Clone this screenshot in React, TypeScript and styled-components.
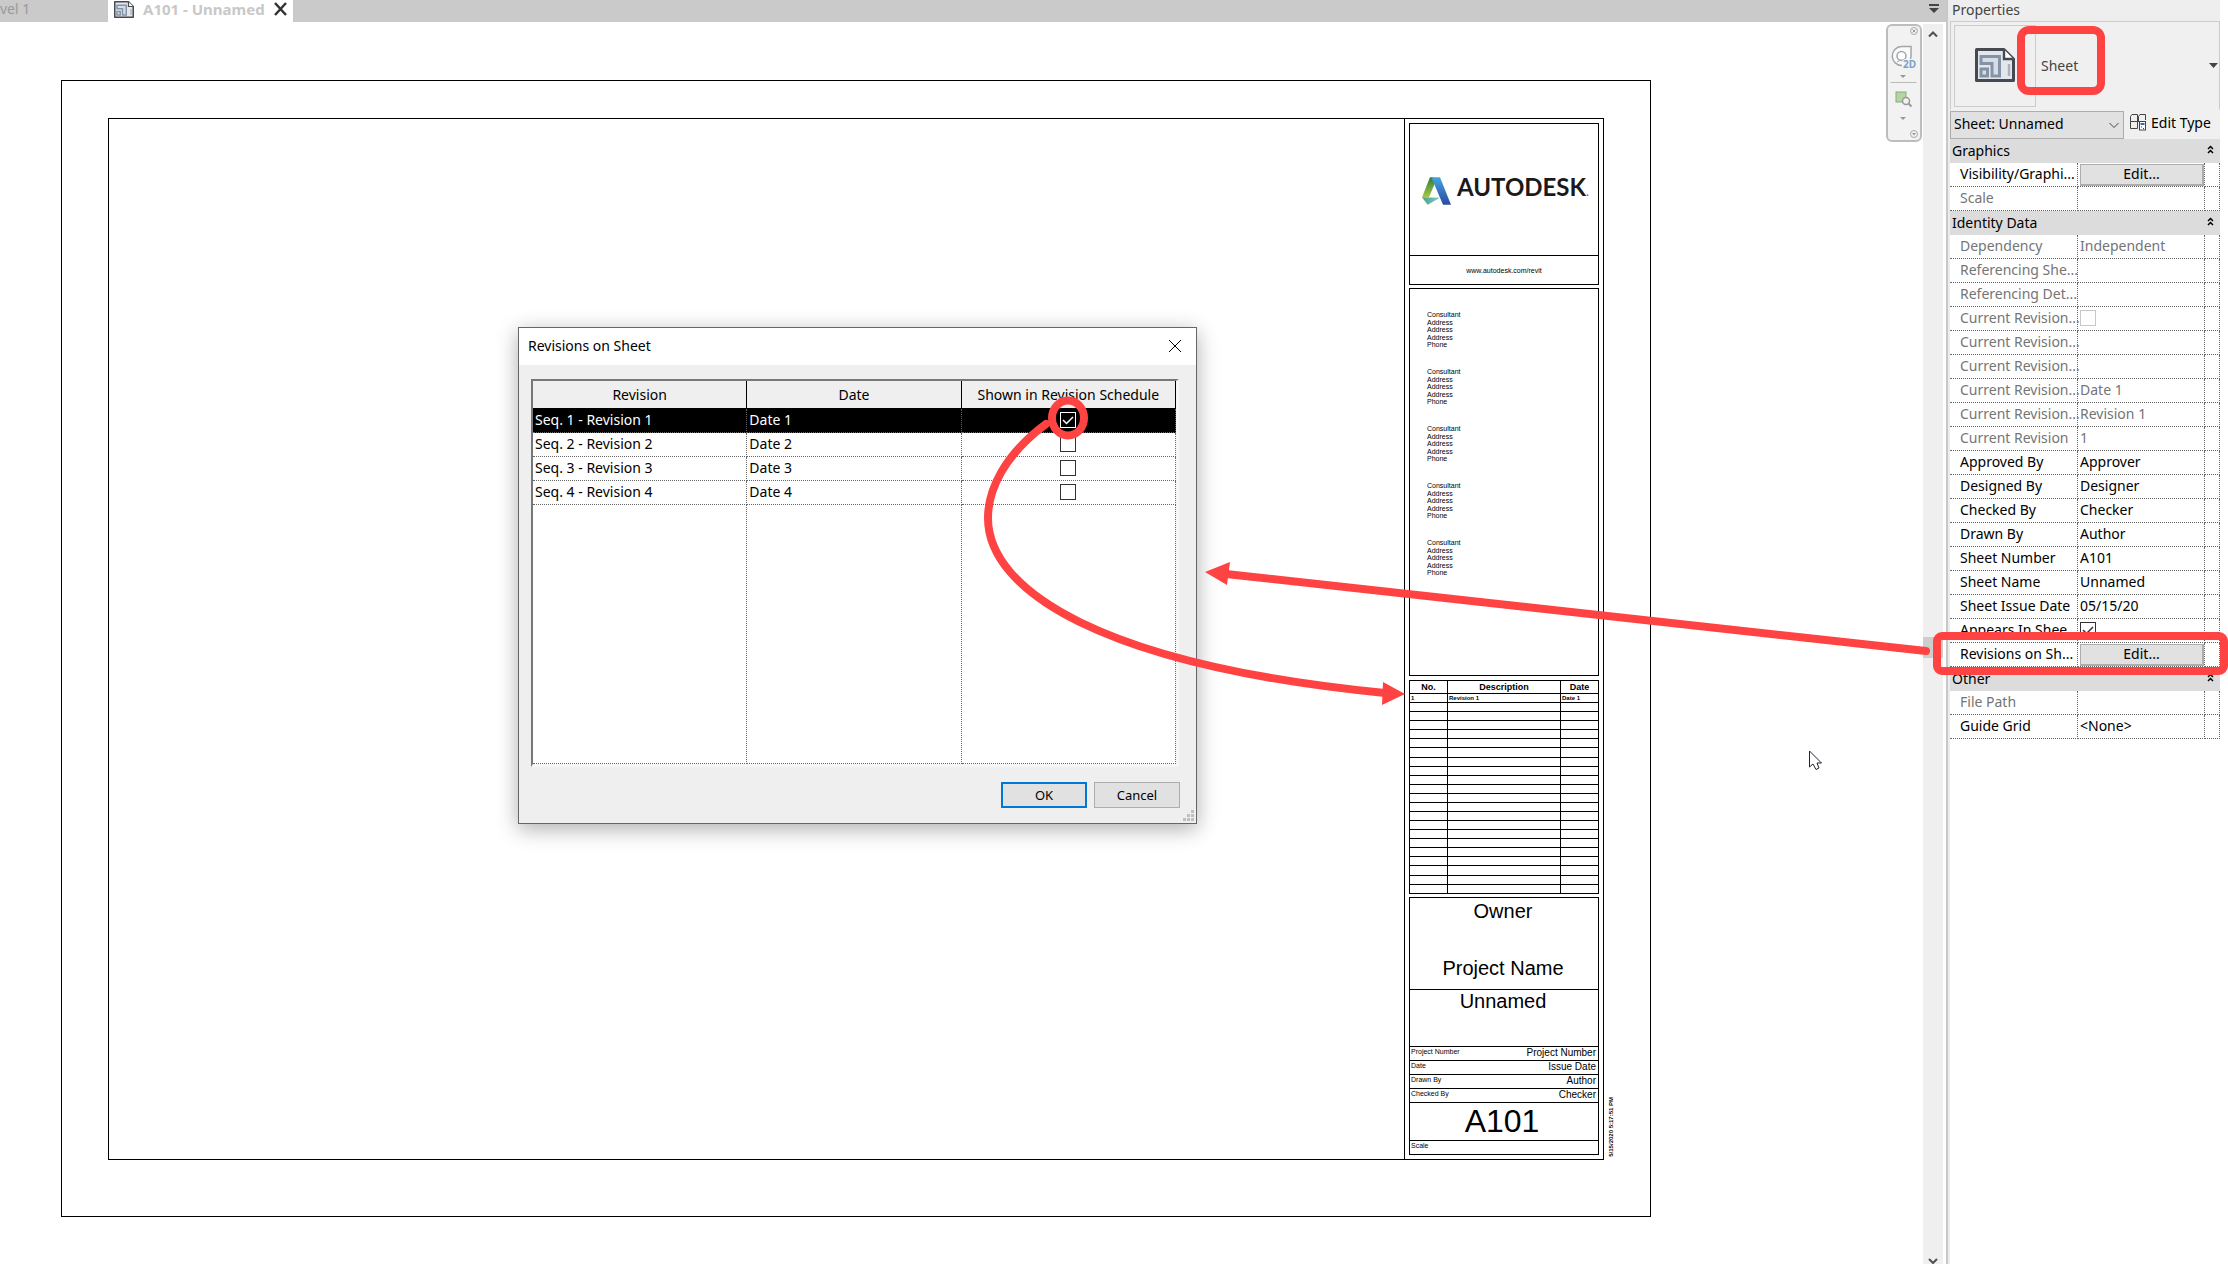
import React from "react";
import styled, { createGlobalStyle, css } from "styled-components";

const UI_FONT = `"Noto Sans", "Open Sans", sans-serif`;
const SHEET_FONT = `"Liberation Sans", Arial, sans-serif`;
const RED = "#ff4343";

const GlobalStyle = createGlobalStyle`
  *, *::before, *::after { box-sizing: border-box; }
  body {
    margin: 0;
    background: #fff;
    color: #000;
    font: 14px/20px ${UI_FONT};
  }
  button, input, select { font: inherit; color: inherit; margin: 0; }
  h2, p, address { margin: 0; font: inherit; }
`;

/* ---------- shell ---------- */

const Shell = styled.div`
  position: relative;
  display: flex;
  height: 100vh;
  overflow: hidden;
`;

const Main = styled.main`
  flex: 1;
  min-width: 0;
  display: flex;
  flex-direction: column;
`;

const TabBar = styled.nav`
  display: flex;
  justify-content: space-between;
  height: 22px;
  background: #cacaca;
`;

const Tabs = styled.div`
  display: flex;
  height: 22px;
`;

const Tab = styled.button<{ $active?: boolean }>`
  display: flex;
  align-items: center;
  width: 108px;
  height: 22px;
  padding: 0 0 4px;
  border: 0;
  background: none;
  color: #999;
  font-size: 14px;
  white-space: nowrap;
  ${(p) =>
    p.$active &&
    css`
      width: auto;
      padding: 0 6px 4px 6px;
      gap: 9px;
      background: #fff;
      color: #c8c8c8;
      font-size: 15px;
      font-weight: 700;
    `}
`;

const TabMenuButton = styled.button`
  width: 28px;
  height: 22px;
  padding: 0 0 4px 11px;
  border: 0;
  background: none;
  line-height: 0;
  text-align: left;
`;

const Workspace = styled.div`
  flex: 1;
  min-height: 0;
  display: flex;
  padding-right: 3px;
`;

const Canvas = styled.section`
  position: relative;
  flex: 1;
  display: flex;
`;

const ScrollTrack = styled.div`
  display: flex;
  flex-direction: column;
  align-items: center;
  justify-content: space-between;
  width: 20px;
  margin-top: 2px;
  padding-top: 6px;
  background: #efefef;
`;

const ScrollThumb = styled.div`
  width: 20px;
  height: 21px;
  background: #cdcdcd;
`;

const ScrollButton = styled.button`
  padding: 0;
  border: 0;
  background: none;
  line-height: 0;
`;

/* ---------- drawing sheet ---------- */

const Sheet = styled.article`
  flex: 1;
  display: flex;
  margin: 58px 272px 47px 61px;
  padding: 37px 0 56px 46px;
  border: 1px solid #000;
  font-family: ${SHEET_FONT};
`;

const SheetFrame = styled.div`
  flex: 1;
  display: flex;
  justify-content: flex-end;
  border: 1px solid #000;
`;

const TitleBlock = styled.div`
  display: flex;
  flex-direction: column;
  gap: 3px;
  width: 199px;
  padding: 4px;
  border-left: 1px solid #000;
`;

const Panel = styled.div<{ $grow?: boolean }>`
  display: flex;
  flex-direction: column;
  border: 1px solid #000;
  ${(p) => p.$grow && "flex: 1;"}
`;

const LogoCell = styled.div`
  display: flex;
  align-items: center;
  gap: 6px;
  height: 132px;
  padding: 2px 0 0 12px;
  border-bottom: 1px solid #000;
`;

const Wordmark = styled.span`
  padding-bottom: 2px;
  font: 700 24px/28px Lato, sans-serif;
  color: #1a1a1a;
  small {
    font-size: 12px;
    color: #777;
  }
`;

const SiteLink = styled.a`
  height: 28px;
  font-size: 7px;
  line-height: 29px;
  text-align: center;
  color: #000;
  text-decoration: none;
`;

const Consultants = styled.div`
  display: flex;
  flex-direction: column;
  gap: 20px;
  padding: 22px 17px;
`;

const Consultant = styled.address`
  display: flex;
  flex-direction: column;
  justify-content: space-between;
  height: 37px;
  font-size: 7px;
  line-height: 7px;
`;

const Schedule = styled.table`
  width: 100%;
  height: 214px;
  margin-top: 1px;
  border-collapse: collapse;
  table-layout: fixed;
  font-size: 6px;
  font-weight: 700;
  line-height: 7px;
  th, td {
    height: 9px;
    padding: 0 1px;
    border: 1px solid #000;
    text-align: left;
  }
  th {
    height: 13px;
    font-size: 9px;
    line-height: 10px;
    text-align: center;
  }
`;

const Big = styled.p<{ $height: number }>`
  height: ${(p) => p.$height}px;
  padding: 2px 2px 0 0;
  font-size: 20px;
  line-height: 23px;
  text-align: center;
`;

const NameCell = styled.div<{ $tight?: boolean }>`
  border-bottom: 1px solid #000;
  ${(p) => p.$tight && `${Big} { padding-top: 0; line-height: 22px; }`}
`;

const InfoRow = styled.div<{ $last?: boolean }>`
  display: flex;
  justify-content: space-between;
  height: ${(p) => (p.$last ? 13 : 14)}px;
  padding: 0 2px 0 1px;
  border-bottom: ${(p) => (p.$last ? 0 : 1)}px solid #000;
  font-size: 10px;
  line-height: 12px;
`;

const InfoLabel = styled.span`
  font-size: 7px;
  line-height: 9px;
`;

const SheetNumber = styled.p`
  height: 38px;
  padding-right: 4px;
  border-bottom: 1px solid #000;
  font-size: 32px;
  line-height: 36px;
  text-align: center;
`;

const SheetMargin = styled.div`
  display: flex;
  align-items: flex-end;
  width: 46px;
  padding: 0 0 3px 4px;
`;

const PlotStamp = styled.span`
  writing-mode: vertical-rl;
  transform: rotate(180deg);
  font-size: 6px;
  font-weight: 700;
  line-height: 7px;
  white-space: nowrap;
`;

/* ---------- navigation bar ---------- */

const NavBar = styled.div`
  position: absolute;
  top: 2px;
  right: 1px;
  display: flex;
  flex-direction: column;
  align-items: center;
  width: 36px;
  height: 118px;
  border: 2px solid #bdbdbd;
  border-radius: 6px;
  background: #f2f2f2;
`;

/* ---------- dialog ---------- */

const Dialog = styled.section`
  position: absolute;
  left: 518px;
  top: 305px;
  width: 679px;
  border: 1px solid #666;
  background: #efefef;
  box-shadow: 0 5px 20px rgba(0, 0, 0, 0.32);
`;

const DialogTitle = styled.header`
  display: flex;
  align-items: center;
  justify-content: space-between;
  height: 37px;
  padding: 0 14px 1px 9px;
  background: #fff;
`;

const IconButton = styled.button`
  padding: 0;
  border: 0;
  background: none;
  line-height: 0;
`;

const DialogBody = styled.div`
  padding: 14px 16px 15px 12px;
`;

const GridBox = styled.div`
  margin-right: 1px;
  border: solid;
  border-width: 2px 3px 3px 2px;
  border-color: #777 #f6f6f6 #f6f6f6 #777;
  background: #fff;
`;

const RevisionGrid = styled.table`
  width: 100%;
  height: 383px;
  border-collapse: separate;
  border-spacing: 0;
  table-layout: fixed;
  th {
    height: 28px;
    padding: 0;
    border-right: 1px solid #000;
    border-bottom: 1px solid #000;
    background: #efefef;
    font-weight: 400;
  }
  td {
    height: 24px;
    padding: 0 2px 1px 2px;
    border-right: 1px dotted #666;
    border-bottom: 1px dotted #666;
    line-height: 20px;
  }
`;

const RevisionRow = styled.tr<{ $selected?: boolean }>`
  ${(p) => p.$selected && "background: #000; color: #fff;"}
`;

const FillerRow = styled.tr`
  && td { height: auto; }
`;

const CheckCell = styled.div`
  display: flex;
  justify-content: center;
`;

const DialogActions = styled.div`
  display: flex;
  justify-content: flex-end;
  gap: 7px;
  padding-top: 15px;
`;

const PushButton = styled.button<{ $primary?: boolean }>`
  width: 86px;
  height: 26px;
  padding: 0;
  border: ${(p) => (p.$primary ? "2px solid #0078d7" : "1px solid #adadad")};
  background: #e1e1e1;
  font-size: 13px;
  line-height: 20px;
`;

const Grip = styled.svg`
  position: absolute;
  right: 1px;
  bottom: 1px;
`;

/* ---------- check box ---------- */

const CheckWrap = styled.span<{ $tone: string }>`
  position: relative;
  display: block;
  width: 16px;
  height: 16px;
  color: ${(p) => p.$tone};
  input {
    appearance: none;
    display: block;
    width: 16px;
    height: 16px;
    border: 1px solid currentColor;
  }
  svg {
    position: absolute;
    inset: 0;
    pointer-events: none;
  }
`;

/* ---------- properties palette ---------- */

const Palette = styled.aside`
  width: 282px;
  padding: 0 8px 0 2px;
  border-left: 2px solid #c8c8c8;
  background: linear-gradient(90deg, #ececec 2px, #fff 2px);
`;

const PaletteTitle = styled.h2`
  height: 21px;
  padding-left: 2px;
  background: #eee;
  color: #444;
  line-height: 19px;
`;

const TypeSelector = styled.div`
  display: flex;
  align-items: center;
  gap: 5px;
  height: 89px;
  padding: 3px 1px 3px 3px;
  border: 1px solid #ccc;
  border-bottom-color: #f0f0f0;
  background: #f0f0f0;
  color: #444;
`;

const TypeThumb = styled.div`
  display: flex;
  align-items: center;
  width: 82px;
  height: 82px;
  padding-left: 20px;
  padding-bottom: 2px;
  border: 1px solid #ccc;
`;

const TypeName = styled.span`
  flex: 1;
  padding-top: 1px;
`;

const InstanceBar = styled.div`
  display: flex;
  align-items: center;
  gap: 6px;
  height: 29px;
  background: #f0f0f0;
`;

const SelectWrap = styled.label`
  position: relative;
  width: 174px;
  select {
    appearance: none;
    width: 100%;
    height: 28px;
    padding: 0 24px 2px 3px;
    border: 1px solid #adadad;
    border-radius: 0;
    background: #e1e1e1;
  }
  svg {
    position: absolute;
    right: 5px;
    top: 11px;
    pointer-events: none;
  }
`;

const EditType = styled.button`
  display: flex;
  align-items: center;
  gap: 4px;
  padding: 0 0 4px;
  border: 0;
  background: none;
  white-space: nowrap;
`;

const PropertyTable = styled.table`
  width: 100%;
  border-collapse: separate;
  border-spacing: 0;
  table-layout: fixed;
`;

const GroupCell = styled.th`
  height: 24px;
  padding: 0 6px 0 2px;
  background: #dcdcdc;
  font-weight: 400;
  text-align: left;
  div {
    display: flex;
    justify-content: space-between;
  }
  svg { margin-top: 4px; }
`;

const PropertyRow = styled.tr<{ $dim?: boolean }>`
  color: ${(p) => (p.$dim ? "#757575" : "#000")};
  th, td {
    height: 24px;
    padding: 0 0 2px 2px;
    border-right: 1px dotted #666;
    border-bottom: 1px dotted #666;
    font-weight: 400;
    line-height: 20px;
    text-align: left;
    white-space: nowrap;
  }
  th { padding-left: 10px; }
`;

const ValueInput = styled.input`
  display: block;
  width: 100%;
  height: 20px;
  padding: 0;
  border: 0;
  background: none;
`;

const EditButton = styled.button`
  display: block;
  width: 100%;
  height: 22px;
  margin-bottom: -2px;
  padding: 0;
  border: 1px solid #adadad;
  border-right-width: 2px;
  border-bottom-width: 2px;
  background: #e1e1e1;
  line-height: 18px;
`;

const Annotations = styled.svg`
  position: absolute;
  top: 0;
  left: 0;
  pointer-events: none;
`;

/* ---------- icons ---------- */

const SheetIcon = ({ width, height }: { width: number; height: number }) => (
  <svg width={width} height={height} viewBox="0 0 40 34" aria-hidden="true">
    <path d="M1.500 1.500H29L38.500 11V32.500H1.500Z" fill="#e3e7ec" stroke="#454a52" strokeWidth="3" strokeLinejoin="round" />
    <path d="M29 1.500V11H38.500" fill="#fff" stroke="#454a52" strokeWidth="2.400" />
    <path d="M6 8.500H24.500V28H17V15.500H6Z" fill="#d6dde6" stroke="#8593a6" strokeWidth="3" />
    <rect x="6" y="21" width="6.500" height="7" fill="#d6dde6" stroke="#8593a6" strokeWidth="3" />
    <path d="M34 16V28" stroke="#a9b1bc" strokeWidth="2.400" />
  </svg>
);

const Chevrons = () => (
  <svg width="7" height="9" viewBox="0 0 7 9" fill="none" stroke="#000" strokeWidth="1.500" aria-hidden="true">
    <path d="M1 4L3.500 1.500L6 4M1 8L3.500 5.500L6 8" />
  </svg>
);

const Arrow = ({ up }: { up?: boolean }) => (
  <svg width="12" height="8" viewBox="0 0 12 8" fill="none" stroke="#505050" strokeWidth="2" aria-hidden="true">
    <path d={up ? "M2 6.500L6 2.500L10 6.500" : "M2 3L6 7L10 3"} />
  </svg>
);

const AutodeskMark = () => (
  <svg width="29" height="28" viewBox="0 0 87 83" aria-hidden="true">
    <defs>
      <linearGradient id="leaf" x1="0" y1="0" x2="0" y2="1">
        <stop offset="0" stopColor="#2f7a3c" />
        <stop offset="1" stopColor="#a5c845" />
      </linearGradient>
      <linearGradient id="sky" x1="0" y1="0" x2="0" y2="1">
        <stop offset="0" stopColor="#42a5e0" />
        <stop offset="1" stopColor="#2d4aa0" />
      </linearGradient>
      <linearGradient id="sea" x1="0" y1="0" x2="1" y2="0">
        <stop offset="0" stopColor="#4a9c8c" />
        <stop offset="1" stopColor="#7fd0c4" />
      </linearGradient>
    </defs>
    <path d="M24 0H34L40 15L21 60H0Z" fill="url(#leaf)" />
    <path d="M0 60L54 62L17 83Z" fill="url(#sea)" />
    <path d="M28 0H54L87 83H63Z" fill="url(#sky)" />
  </svg>
);

const NavIcons = () => (
  <svg width="32" height="114" viewBox="0 0 32 114" fill="none" aria-hidden="true">
    <circle cx="26" cy="5" r="3.500" stroke="#aaa" />
    <path d="M24.500 3.500L27.500 6.500M27.500 3.500L24.500 6.500" stroke="#999" />
    <path d="M14 39.500A9.500 9.500 0 1 1 13.500 20.500H23V30.500Q23 33 21 35" fill="#fafafa" stroke="#a2a6ab" strokeWidth="1.500" />
    <circle cx="13.500" cy="30" r="4.500" fill="#fff" stroke="#a2a6ab" strokeWidth="1.500" />
    <path d="M9 36Q14 32 19 36" stroke="#a2a6ab" />
    <path d="M12 49H18L15 52Z" fill="#999" />
    <path d="M2.500 56.500H28.500" stroke="#bbb" />
    <rect x="8" y="66" width="10" height="10" fill="#b5d5a5" stroke="#85ad78" />
    <circle cx="18" cy="75" r="3.500" fill="#f2f2f2" stroke="#999" strokeWidth="1.500" />
    <path d="M20.500 77.500L23.500 80.500" stroke="#999" strokeWidth="2" />
    <path d="M12 91H18L15 94Z" fill="#999" />
    <circle cx="26" cy="108" r="3.500" stroke="#aaa" />
    <path d="M24 107H28L26 109.500Z" fill="#999" />
    <text x="15" y="42" fill="#7d9fc6" stroke="#f2f2f2" strokeWidth="2" paintOrder="stroke" fontFamily="Noto Sans, sans-serif" fontWeight="700" fontSize="10">2D</text>
  </svg>
);

const EditTypeIcon = () => (
  <svg width="17" height="17" viewBox="0 0 17 17" fill="none" stroke="#444" aria-hidden="true">
    <path d="M0.500 2.500L2 0.500H7.500V7.500H0.500ZM8.500 2.500L10 0.500H15.500V6M8.500 2.500V7.500M0.500 7.500V14.500H7.500V7.500M7.500 7.500H10" />
    <rect x="9.500" y="7.500" width="6" height="8.500" fill="#fff" />
    <path d="M10.500 10H14.500" stroke="#2f6fc0" strokeWidth="2" />
    <path d="M11 13H12M13 14.500H14" />
  </svg>
);

/* ---------- data ---------- */

const revisions = [1, 2, 3, 4];

type Property = { name: string; value?: string; dim?: boolean; kind?: "button" | "check"; checked?: boolean };

const groups: { title: string; rows: Property[] }[] = [
  {
    title: "Graphics",
    rows: [
      { name: "Visibility/Graphi...", kind: "button" },
      { name: "Scale", dim: true },
    ],
  },
  {
    title: "Identity Data",
    rows: [
      { name: "Dependency", value: "Independent", dim: true },
      { name: "Referencing She...", dim: true },
      { name: "Referencing Det...", dim: true },
      { name: "Current Revision...", dim: true, kind: "check" },
      { name: "Current Revision...", dim: true },
      { name: "Current Revision...", dim: true },
      { name: "Current Revision...", value: "Date 1", dim: true },
      { name: "Current Revision...", value: "Revision 1", dim: true },
      { name: "Current Revision", value: "1", dim: true },
      { name: "Approved By", value: "Approver" },
      { name: "Designed By", value: "Designer" },
      { name: "Checked By", value: "Checker" },
      { name: "Drawn By", value: "Author" },
      { name: "Sheet Number", value: "A101" },
      { name: "Sheet Name", value: "Unnamed" },
      { name: "Sheet Issue Date", value: "05/15/20" },
      { name: "Appears In Shee", kind: "check", checked: true },
      { name: "Revisions on Sh...", kind: "button" },
    ],
  },
  {
    title: "Other",
    rows: [
      { name: "File Path", dim: true },
      { name: "Guide Grid", value: "<None>" },
    ],
  },
];

const info = [
  ["Project Number", "Project Number"],
  ["Date", "Issue Date"],
  ["Drawn By", "Author"],
  ["Checked By", "Checker"],
];

/* ---------- parts ---------- */

function CheckBox({ label, labelledBy, checked, tone, disabled }: { label?: string; labelledBy?: string; checked?: boolean; tone: string; disabled?: boolean }) {
  return (
    <CheckWrap $tone={tone}>
      <input type="checkbox" aria-label={label} aria-labelledby={labelledBy} defaultChecked={checked} disabled={disabled} />
      {checked && (
        <svg width="16" height="16" viewBox="0 0 16 16" fill="none" stroke="currentColor" strokeWidth="1.500" aria-hidden="true">
          <path d="M3 8L6.500 11.500L13 5" />
        </svg>
      )}
    </CheckWrap>
  );
}

function PropertyValue({ property, labelId }: { property: Property; labelId: string }) {
  if (property.kind === "button") return <EditButton aria-describedby={labelId}>Edit...</EditButton>;
  if (property.kind === "check")
    return <CheckBox labelledBy={labelId} checked={property.checked} disabled={property.dim} tone={property.dim ? "#c8c8c8" : "#333"} />;
  if (property.dim) return <>{property.value}</>;
  return <ValueInput aria-labelledby={labelId} defaultValue={property.value} />;
}

function Properties() {
  return (
    <Palette>
      <PaletteTitle>Properties</PaletteTitle>
      <TypeSelector>
        <TypeThumb>
          <SheetIcon width={40} height={34} />
        </TypeThumb>
        <TypeName>Sheet</TypeName>
        <IconButton aria-label="Change type">
          <svg width="9" height="5" viewBox="0 0 9 5" aria-hidden="true">
            <path d="M0 0H9L4.500 5Z" fill="#444" />
          </svg>
        </IconButton>
      </TypeSelector>
      <InstanceBar>
        <SelectWrap>
          <select aria-label="Instance">
            <option>Sheet: Unnamed</option>
          </select>
          <svg width="10" height="7" viewBox="0 0 10 7" fill="none" stroke="#444" aria-hidden="true">
            <path d="M0.500 1L5 5.500L9.500 1" />
          </svg>
        </SelectWrap>
        <EditType>
          <EditTypeIcon />
          Edit Type
        </EditType>
      </InstanceBar>
      <PropertyTable>
        <colgroup>
          <col width="128" />
          <col />
          <col width="15" />
        </colgroup>
        {groups.map((group, g) => (
          <tbody key={group.title}>
            <tr>
              <GroupCell colSpan={3}>
                <div>
                  {group.title}
                  <Chevrons />
                </div>
              </GroupCell>
            </tr>
            {group.rows.map((row, r) => {
              const id = `property-${g}-${r}`;
              return (
                <PropertyRow key={id} $dim={row.dim}>
                  <th scope="row" id={id}>{row.name}</th>
                  <td>
                    <PropertyValue property={row} labelId={id} />
                  </td>
                  <td />
                </PropertyRow>
              );
            })}
          </tbody>
        ))}
      </PropertyTable>
    </Palette>
  );
}

function RevisionsDialog() {
  return (
    <Dialog role="dialog" aria-label="Revisions on Sheet">
      <DialogTitle>
        Revisions on Sheet
        <IconButton aria-label="Close">
          <svg width="14" height="14" viewBox="0 0 14 14" stroke="#000" aria-hidden="true">
            <path d="M1 1L13 13M13 1L1 13" />
          </svg>
        </IconButton>
      </DialogTitle>
      <DialogBody>
        <GridBox>
          <RevisionGrid>
            <thead>
              <tr>
                <th>Revision</th>
                <th>Date</th>
                <th>Shown in Revision Schedule</th>
              </tr>
            </thead>
            <tbody>
              {revisions.map((n) => (
                <RevisionRow key={n} $selected={n === 1}>
                  <td>{`Seq. ${n} - Revision ${n}`}</td>
                  <td>{`Date ${n}`}</td>
                  <td>
                    <CheckCell>
                      <CheckBox label={`Show revision ${n}`} checked={n === 1} tone={n === 1 ? "#fff" : "#333"} />
                    </CheckCell>
                  </td>
                </RevisionRow>
              ))}
              <FillerRow>
                <td />
                <td />
                <td />
              </FillerRow>
            </tbody>
          </RevisionGrid>
        </GridBox>
        <DialogActions>
          <PushButton $primary>OK</PushButton>
          <PushButton>Cancel</PushButton>
        </DialogActions>
      </DialogBody>
      <Grip width="12" height="12" viewBox="0 0 12 12" fill="#bfbfbf" aria-hidden="true">
        <path d="M8 0h3v3h-3zM4 4h3v3h-3zM8 4h3v3h-3zM0 8h3v3h-3zM4 8h3v3h-3zM8 8h3v3h-3z" />
      </Grip>
    </Dialog>
  );
}

function DrawingSheet() {
  return (
    <Sheet>
      <SheetFrame>
        <TitleBlock>
          <Panel>
            <LogoCell>
              <AutodeskMark />
              <Wordmark>
                AUTODESK<small>.</small>
              </Wordmark>
            </LogoCell>
            <SiteLink href="#">www.autodesk.com/revit</SiteLink>
          </Panel>
          <Panel $grow>
            <Consultants>
              {[1, 2, 3, 4, 5].map((n) => (
                <Consultant key={n}>
                  <span>Consultant</span>
                  <span>Address</span>
                  <span>Address</span>
                  <span>Address</span>
                  <span>Phone</span>
                </Consultant>
              ))}
            </Consultants>
          </Panel>
          <Schedule>
            <colgroup>
              <col width="38" />
              <col />
              <col width="38" />
            </colgroup>
            <thead>
              <tr>
                <th>No.</th>
                <th>Description</th>
                <th>Date</th>
              </tr>
            </thead>
            <tbody>
              <tr>
                <td>1</td>
                <td>Revision 1</td>
                <td>Date 1</td>
              </tr>
              {Array.from({ length: 21 }, (_, i) => (
                <tr key={i}>
                  <td />
                  <td />
                  <td />
                </tr>
              ))}
            </tbody>
          </Schedule>
          <Panel>
            <NameCell>
              <Big $height={57}>Owner</Big>
              <Big $height={34}>Project Name</Big>
            </NameCell>
            <NameCell $tight>
              <Big $height={56}>Unnamed</Big>
            </NameCell>
            {info.map(([label, value]) => (
              <InfoRow key={label}>
                <InfoLabel>{label}</InfoLabel>
                {value}
              </InfoRow>
            ))}
            <SheetNumber>A101</SheetNumber>
            <InfoRow $last>
              <InfoLabel>Scale</InfoLabel>
            </InfoRow>
          </Panel>
        </TitleBlock>
      </SheetFrame>
      <SheetMargin>
        <PlotStamp>5/15/2020 5:17:51 PM</PlotStamp>
      </SheetMargin>
    </Sheet>
  );
}

export default function App() {
  return (
    <>
      <GlobalStyle />
      <Shell>
        <Main>
          <TabBar>
            <Tabs>
              <Tab>vel 1</Tab>
              <Tab $active>
                <SheetIcon width={20} height={17} />
                A101 - Unnamed
                <svg width="13" height="14" viewBox="0 0 13 14" stroke="#333" strokeWidth="2.500" aria-hidden="true">
                  <path d="M1 1L12 13M12 1L1 13" />
                </svg>
              </Tab>
            </Tabs>
            <TabMenuButton aria-label="Open views">
              <svg width="10" height="10" viewBox="0 0 10 10" aria-hidden="true">
                <path d="M0 0H10V2H0ZM0 4H10L5 9Z" fill="#444" />
              </svg>
            </TabMenuButton>
          </TabBar>
          <Workspace>
            <Canvas>
              <DrawingSheet />
              <NavBar>
                <NavIcons />
              </NavBar>
              <RevisionsDialog />
            </Canvas>
            <ScrollTrack>
              <ScrollButton aria-label="Scroll up">
                <Arrow up />
              </ScrollButton>
              <ScrollThumb />
              <ScrollButton aria-label="Scroll down">
                <Arrow />
              </ScrollButton>
            </ScrollTrack>
          </Workspace>
        </Main>
        <Properties />
        <Annotations width="2228" height="1264" viewBox="0 0 2228 1264" fill="none" stroke={RED} strokeWidth="8" aria-hidden="true">
          <rect x="2021" y="30" width="80" height="61" rx="8" />
          <rect x="1937" y="636" width="287" height="35" rx="5" />
          <ellipse cx="1068" cy="418" rx="16" ry="17.500" />
          <path d="M1046 424C1004 455 988 490 988 518C988 590 1100 665 1385 693" strokeLinecap="round" />
          <path d="M1405 694L1383 682L1382 705Z" fill={RED} stroke="none" />
          <path d="M1926 651L1226 574" strokeLinecap="round" />
          <path d="M1205 572L1230 562L1227 585Z" fill={RED} stroke="none" />
          <path d="M1809.500 751V767L1813 764L1816 769.500L1819 768L1817 763H1821.500Z" fill="#fff" stroke="#223" strokeWidth="1" />
        </Annotations>
      </Shell>
    </>
  );
}
